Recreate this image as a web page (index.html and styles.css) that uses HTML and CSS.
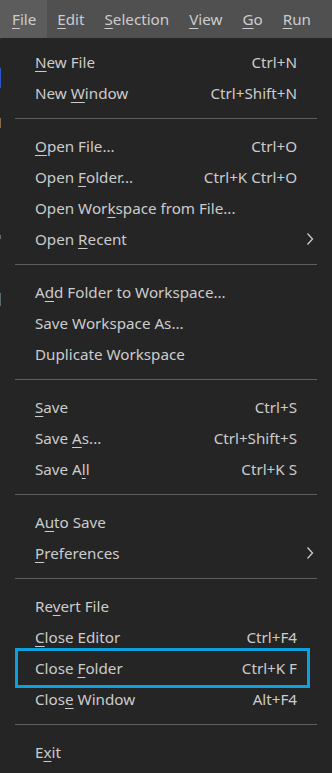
FILE: index.html
```html
<!DOCTYPE html>
<html lang="en">
<head>
    <meta charset="UTF-8">
    <meta name="viewport" content="width=device-width, initial-scale=1.0">
    <title>File menu</title>
    <link rel="stylesheet" href="styles.css">
</head>
<body>
    <div class="menubar">
        <div class="top-item active"><u>F</u>ile</div>
        <div class="top-item"><u>E</u>dit</div>
        <div class="top-item"><u>S</u>election</div>
        <div class="top-item"><u>V</u>iew</div>
        <div class="top-item"><u>G</u>o</div>
        <div class="top-item"><u>R</u>un</div>
        <div class="top-item last"><u>T</u>erminal</div>
    </div>

    <div class="window">
        <div class="edge"></div>
        <div class="menu">
            <div class="item"><span class="label"><u>N</u>ew File</span><span class="key">Ctrl+N</span></div>
            <div class="item"><span class="label">New <u>W</u>indow</span><span class="key">Ctrl+Shift+N</span></div>
            <div class="sep"></div>
            <div class="item"><span class="label"><u>O</u>pen File...</span><span class="key">Ctrl+O</span></div>
            <div class="item"><span class="label">Open <u>F</u>older...</span><span class="key">Ctrl+K Ctrl+O</span></div>
            <div class="item"><span class="label">Open Wor<u>k</u>space from File...</span></div>
            <div class="item"><span class="label">Open <u>R</u>ecent</span>
                <span class="sub"><svg width="8" height="14" viewBox="0 0 8 14"><path d="M1.5 1.5 L6.5 7 L1.5 12.5" fill="none" stroke="#cccccc" stroke-width="1.3"/></svg></span>
            </div>
            <div class="sep"></div>
            <div class="item"><span class="label">A<u>d</u>d Folder to Workspace...</span></div>
            <div class="item"><span class="label">Save Workspace As...</span></div>
            <div class="item"><span class="label">Duplicate Workspace</span></div>
            <div class="sep"></div>
            <div class="item"><span class="label"><u>S</u>ave</span><span class="key">Ctrl+S</span></div>
            <div class="item"><span class="label">Save <u>A</u>s...</span><span class="key">Ctrl+Shift+S</span></div>
            <div class="item"><span class="label">Save A<u>l</u>l</span><span class="key">Ctrl+K S</span></div>
            <div class="sep"></div>
            <div class="item"><span class="label">A<u>u</u>to Save</span></div>
            <div class="item"><span class="label"><u>P</u>references</span>
                <span class="sub"><svg width="8" height="14" viewBox="0 0 8 14"><path d="M1.5 1.5 L6.5 7 L1.5 12.5" fill="none" stroke="#cccccc" stroke-width="1.3"/></svg></span>
            </div>
            <div class="sep"></div>
            <div class="item"><span class="label">Re<u>v</u>ert File</span></div>
            <div class="item"><span class="label"><u>C</u>lose Editor</span><span class="key">Ctrl+F4</span></div>
            <div class="item focused"><span class="label">Close <u>F</u>older</span><span class="key">Ctrl+K F</span></div>
            <div class="item"><span class="label">Clos<u>e</u> Window</span><span class="key">Alt+F4</span></div>
            <div class="sep"></div>
            <div class="item"><span class="label">E<u>x</u>it</span></div>
        </div>
    </div>
</body>
</html>
```

FILE: styles.css
```css
html, body {
    margin: 0;
    padding: 0;
}
body {
    width: 332px;
    height: 773px;
    overflow: hidden;
    background: #252526;
    color: #cccccc;
    font-family: "Noto Sans", "Open Sans", sans-serif;
    font-size: 15.2px;
}
u {
    text-decoration-thickness: 1px;
    text-underline-offset: 3px;
}

.menubar {
    display: flex;
    height: 38px;
    background: #505050;
    white-space: nowrap;
    overflow: hidden;
}
.top-item {
    display: flex;
    align-items: center;
    padding: 0 10px;
    flex-shrink: 0;
}
.top-item:first-child {
    padding: 0 11px 0 12px;
}
.top-item.last {
    padding-left: 19px;
}
.top-item.active {
    background: #5c5c5c;
}

.window {
    display: flex;
}
.edge {
    width: 1px;
    flex-shrink: 0;
    background: linear-gradient(to bottom,
        #3a3a3a 0, #3a3a3a 1px,
        #252526 1px, #252526 30px,
        #2d56c9 30px, #2d56c9 50px,
        #252526 50px, #252526 80px,
        #8a6a4a 80px, #8a6a4a 90px,
        #252526 90px, #252526 197px,
        #6a6a6a 197px, #6a6a6a 201px,
        #252526 201px, #252526 255px,
        #5a6b70 255px, #5a6b70 268px,
        #252526 268px);
}
.menu {
    flex: 1;
    padding: 8px 0 6px;
}
.item {
    position: relative;
    display: flex;
    align-items: center;
    height: 31px;
    padding: 0 35px 0 34px;
    white-space: nowrap;
}
.label {
    flex: 1;
}
.key {
    text-align: right;
}
.sub {
    position: absolute;
    right: 18px;
    top: 9px;
    display: flex;
}
.sep {
    height: 1px;
    margin: 10px 15px 11px 14px;
    background: #5f5f5f;
}
.focused::after {
    content: "";
    position: absolute;
    left: 14px;
    right: 22px;
    top: -4px;
    bottom: -5px;
    border: 3px solid #0ca0dc;
}
```
